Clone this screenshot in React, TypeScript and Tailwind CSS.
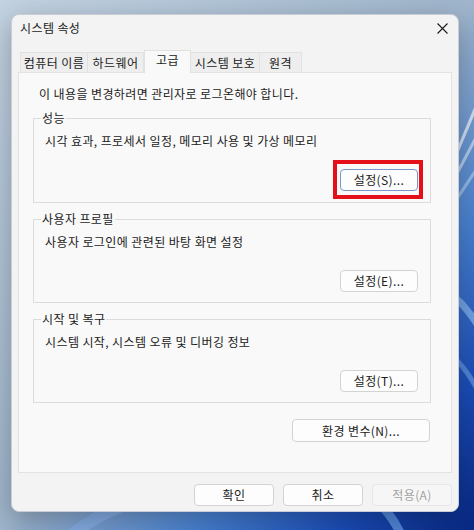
import React from 'react';

const FONT = { fontFamily: '"Noto Sans CJK KR", "Noto Sans", sans-serif' };

function Wallpaper() {
	return (
		<svg className="absolute inset-0" width={474} height={530} viewBox="0 0 474 530">
			<defs>
				<linearGradient id="wp" x1="0" y1="0" x2="1" y2="1">
					<stop offset="0" stopColor="#c3d3e2" />
					<stop offset="0.5" stopColor="#9fb5cc" />
					<stop offset="0.7" stopColor="#4a83d2" />
					<stop offset="0.86" stopColor="#1a4cb8" />
					<stop offset="1" stopColor="#082884" />
				</linearGradient>
			</defs>
			<rect width={474} height={530} fill="url(#wp)" />
			{/* swirls on the right edge */}
			<path d="M440 190 Q468 130 490 70" stroke="#e3eefa" strokeWidth={3} fill="none" opacity={0.8} />
			<path d="M440 205 Q470 150 495 100" stroke="#cfe0f5" strokeWidth={3} fill="none" opacity={0.7} />
			<path d="M440 225 Q472 175 500 135" stroke="#b9d3f2" strokeWidth={3} fill="none" opacity={0.6} />
			<path d="M430 280 Q470 300 490 350" stroke="#8ab8f0" strokeWidth={7} fill="none" opacity={0.7} />
			<path d="M430 340 Q470 360 490 420" stroke="#6fa3ea" strokeWidth={5} fill="none" opacity={0.6} />
			{/* bottom bands */}
			<path d="M60 545 Q90 515 140 500" stroke="#86aee6" strokeWidth={12} fill="none" opacity={0.8} />
			<path d="M370 495 Q395 515 405 545" stroke="#5f97e2" strokeWidth={9} fill="none" opacity={0.8} />
		</svg>
	);
}

function Button({
	label,
	width = 'w-[78px]',
	height = 'h-[22px]',
	accent = false,
	disabled = false,
}: {
	label: string;
	width?: string;
	height?: string;
	accent?: boolean;
	disabled?: boolean;
}) {
	return (
		<div
			className={`${width} ${height} flex items-center justify-center rounded-[4px] border text-[12px] ${
				disabled
					? 'border-[#e6e6e6] bg-[#f6f6f6] text-[#a2a2a2]'
					: accent
						? 'border-[#7b97c7] bg-[#fdfdfd] text-[#1b1b1b]'
						: 'border-[#d3d3d3] bg-[#fdfdfd] text-[#1b1b1b]'
			}`}
		>
			{label}
		</div>
	);
}

function Group({
	title,
	text,
	button,
	height,
	marked = false,
}: {
	title: string;
	text: string;
	button: string;
	height: string;
	marked?: boolean;
}) {
	return (
		<div className={`relative w-[398px] ${height} border border-[#dcdcdc] flex flex-col`}>
			<span className="absolute -top-[9px] left-[7px] bg-[#f9f9f9] px-[1px] leading-[16px]">
				{title}
			</span>
			<p className="pt-[14px] pl-[11px] leading-[16px]">{text}</p>
			<div className="mt-[20px] flex justify-end pr-[12px]">
				<div className="relative">
					<Button label={button} accent={marked} />
					{marked && (
						<div className="absolute -left-[7px] -top-[9px] -right-[5px] -bottom-[8px] border-[4px] border-[#e3101a]" />
					)}
				</div>
			</div>
		</div>
	);
}

const tabs = [
	{ label: '컴퓨터 이름', w: 'w-[68px]' },
	{ label: '하드웨어', w: 'w-[57px]' },
	{ label: '고급', w: 'w-[47px]', active: true },
	{ label: '시스템 보호', w: 'w-[70px]' },
	{ label: '원격', w: 'w-[43px]' },
];

export default function App() {
	return (
		<div className="relative w-[474px] h-[530px] overflow-hidden" style={FONT}>
			<Wallpaper />

			<div className="relative pl-[11px] pt-[14px]">
				<div className="w-[448px] h-[498px] rounded-[8px] bg-[#f3f3f3] border border-[#c9ced6] shadow-[0_8px_28px_rgba(0,0,0,0.28)] flex flex-col text-[12px] tracking-[0.4px] text-[#1b1b1b]">
					{/* title bar */}
					<div className="h-[35px] flex items-start justify-between pt-[5px] pl-[8px] pr-[10px]">
						<span className="leading-[16px]">시스템 속성</span>
						<svg width={11} height={11} viewBox="0 0 11 11" className="mt-[3px]">
							<path d="M0.5 0.5 L10.5 10.5 M10.5 0.5 L0.5 10.5" stroke="#1b1b1b" strokeWidth={1.1} />
						</svg>
					</div>

					{/* tabs */}
					<div className="h-[22px] flex items-end pl-[9px]">
						{tabs.map((t) =>
							t.active ? (
								<div
									key={t.label}
									className={`${t.w} h-[23px] -mb-[1px] relative z-10 bg-[#f9f9f9] border border-b-0 border-[#e1e1e1] flex items-start justify-center pt-[1px] leading-[16px]`}
								>
									{t.label}
								</div>
							) : (
								<div
									key={t.label}
									className={`${t.w} h-[20px] bg-[#eeeeee] border border-b-0 border-[#e1e1e1] -ml-[1px] flex items-center justify-center leading-[16px]`}
								>
									{t.label}
								</div>
							),
						)}
					</div>

					{/* tab panel */}
					<div className="mx-[6px] h-[401px] bg-[#f9f9f9] border border-[#e3e3e3] flex flex-col pl-[14px] pt-[13px]">
						<p className="pl-[6px] leading-[16px]">이 내용을 변경하려면 관리자로 로그온해야 합니다.</p>

						<div className="mt-[16px] flex flex-col gap-[16px]">
							<Group
								title="성능"
								text="시각 효과, 프로세서 일정, 메모리 사용 및 가상 메모리"
								button="설정(S)..."
								height="h-[85px]"
								marked
							/>
							<Group
								title="사용자 프로필"
								text="사용자 로그인에 관련된 바탕 화면 설정"
								button="설정(E)..."
								height="h-[84px]"
							/>
							<Group
								title="시작 및 복구"
								text="시스템 시작, 시스템 오류 및 디버깅 정보"
								button="설정(T)..."
								height="h-[84px]"
							/>
						</div>

						<div className="mt-[16px] w-[398px] flex justify-end pr-[1px]">
							<Button label="환경 변수(N)..." width="w-[138px]" height="h-[23px]" />
						</div>
					</div>

					{/* footer buttons */}
					<div className="mt-[11px] flex justify-end gap-[9px] pr-[6px]">
						<Button label="확인" width="w-[80px]" />
						<Button label="취소" width="w-[80px]" />
						<Button label="적용(A)" width="w-[80px]" disabled />
					</div>
				</div>
			</div>
		</div>
	);
}
